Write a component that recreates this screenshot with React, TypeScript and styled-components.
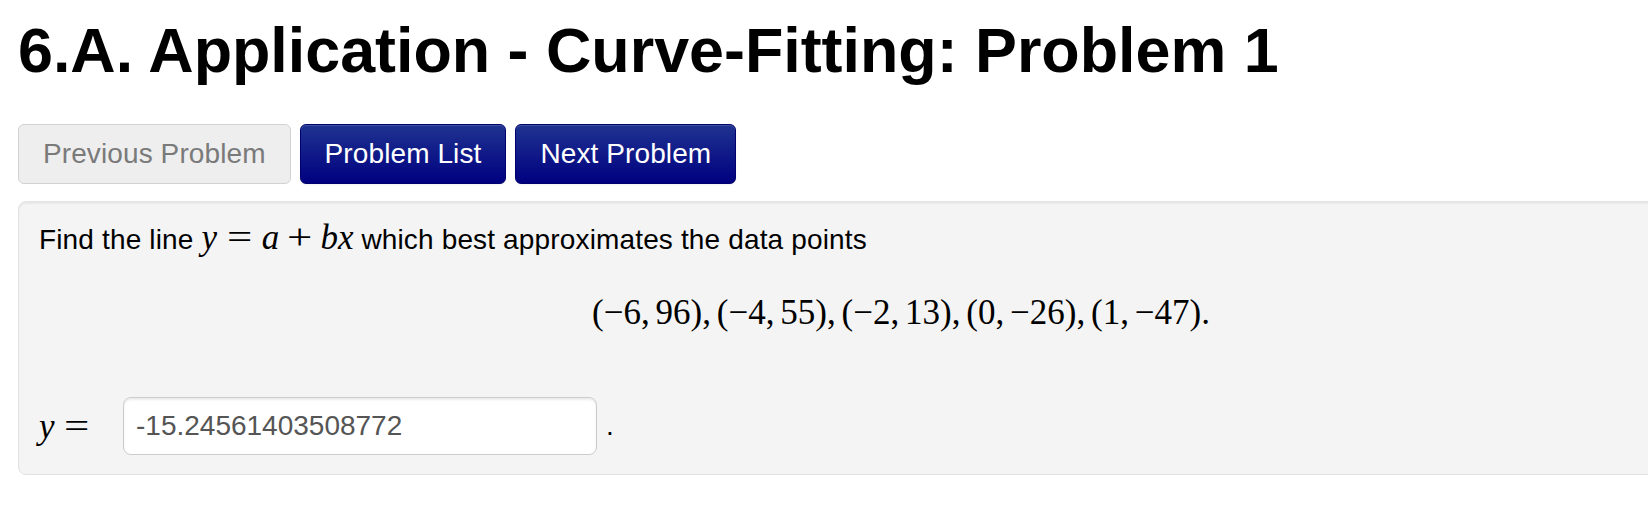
import React from "react";
import styled, {createGlobalStyle} from "styled-components";

const points: [number, number][] = [[-6, 96], [-4, 55], [-2, 13], [0, -26], [1, -47]];

// math minus sign, as MathJax renders it
const num = (n: number) => (n < 0 ? "\u2212" + Math.abs(n) : String(n));

export default function App() {
    return (
        <>
            <GlobalStyle/>
            <Page>
                <Title>6.A. Application - Curve-Fitting: Problem 1</Title>
                <ButtonRow>
                    <NavButton disabled>Previous Problem</NavButton>
                    <NavButton $primary>Problem List</NavButton>
                    <NavButton $primary>Next Problem</NavButton>
                </ButtonRow>
                <Well>
                    <Prompt>
                        Find the line{" "}
                        <MathInline>
                            <Var>y</Var><Op $space={0.25}>=</Op><Var>a</Var><Op $space={0.2}>+</Op><Var>b</Var><Var>x</Var>
                        </MathInline>{" "}
                        which best approximates the data points
                    </Prompt>
                    <DisplayMath>
                        {points.map(([x, y], i) => (
                            <React.Fragment key={i}>
                                ({num(x)}<Comma>,</Comma>{num(y)})
                                {i < points.length - 1 ? <Comma>,</Comma> : "."}
                            </React.Fragment>
                        ))}
                    </DisplayMath>
                    <AnswerRow>
                        <AnswerLabel>
                            <Var>y</Var><Op $space={0.25}>=</Op>
                        </AnswerLabel>
                        <AnswerInput type="text" readOnly value="-15.24561403508772"/>
                        <Period>.</Period>
                    </AnswerRow>
                </Well>
            </Page>
        </>
    )
}

const GlobalStyle = createGlobalStyle`
  html, body {
    margin: 0;
    padding: 0;
    background: #fff;
  }
  body {
    overflow: hidden;
    font-family: "Liberation Sans", Arial, Helvetica, sans-serif;
    color: #000;
  }
`
const Page = styled.div`
  padding: 10px 0 40px 18px;
  overflow: hidden;
`
const Title = styled.h2`
  margin: 0;
  font-size: 62.8px;
  line-height: 80px;
  font-weight: 700;
  color: #000;
`
const ButtonRow = styled.div`
  display: flex;
  gap: 9px;
  margin-top: 34px;
`
const NavButton = styled.button<{$primary?: boolean}>`
  height: 60px;
  padding: 0 24px;
  box-sizing: border-box;
  font-family: inherit;
  font-size: 28px;
  line-height: 40px;
  letter-spacing: 0.1px;
  border-radius: 6px;
  cursor: pointer;
  border: 1px solid ${p => (p.$primary ? "#00006e" : "#d2d2d2")};
  color: ${p => (p.$primary ? "#fff" : "#7a7a7a")};
  background: ${p => (p.$primary ? "linear-gradient(#1f3390, #000080)" : "#eeeeee")};
  box-shadow: ${p => (p.$primary ? "inset 0 1px 0 rgba(255,255,255,.15), 0 1px 2px rgba(0,0,0,.05)" : "none")};
  &:disabled {
    cursor: default;
  }
`
const Well = styled.div`
  margin-top: 17px;
  width: 1766px;
  box-sizing: border-box;
  padding: 18px 20px 19px;
  background: #f4f4f4;
  border: 1px solid #e3e3e3;
  border-radius: 8px;
  box-shadow: inset 0 2px 2px rgba(0, 0, 0, .05);
`
const Prompt = styled.p`
  margin: 0;
  font-size: 28px;
  line-height: 40px;
  letter-spacing: 0.15px;
`
const MathInline = styled.span`
  font-family: "Liberation Serif", "Times New Roman", serif;
  font-size: 35px;
  line-height: 1;
  letter-spacing: 0;
`
const Var = styled.i`
  font-style: italic;
`
// relation and binary operators take the wider TeX box and glyph
const Op = styled.span<{$space: number}>`
  display: inline-block;
  width: 0.778em;
  text-align: center;
  transform: scaleX(1.28);
  margin: 0 ${p => p.$space}em;
`
const Comma = styled.span`
  margin-right: 0.167em;
`
const DisplayMath = styled.div`
  margin-top: 33px;
  text-align: center;
  font-family: "Liberation Serif", "Times New Roman", serif;
  font-size: 35px;
  line-height: 40px;
`
const AnswerRow = styled.div`
  display: flex;
  align-items: center;
  margin-top: 64px;
  height: 58px;
`
const AnswerLabel = styled(MathInline)`
  width: 84px;
  flex-shrink: 0;
`
const AnswerInput = styled.input`
  width: 474px;
  height: 58px;
  box-sizing: border-box;
  padding: 0 12px;
  font-family: inherit;
  font-size: 28px;
  color: #555;
  background: #fff;
  border: 1px solid #cccccc;
  border-radius: 8px;
  box-shadow: inset 0 2px 2px rgba(0, 0, 0, .075);
  outline: none;
`
const Period = styled.span`
  margin-left: 9px;
  font-size: 28px;
  line-height: 1;
`
